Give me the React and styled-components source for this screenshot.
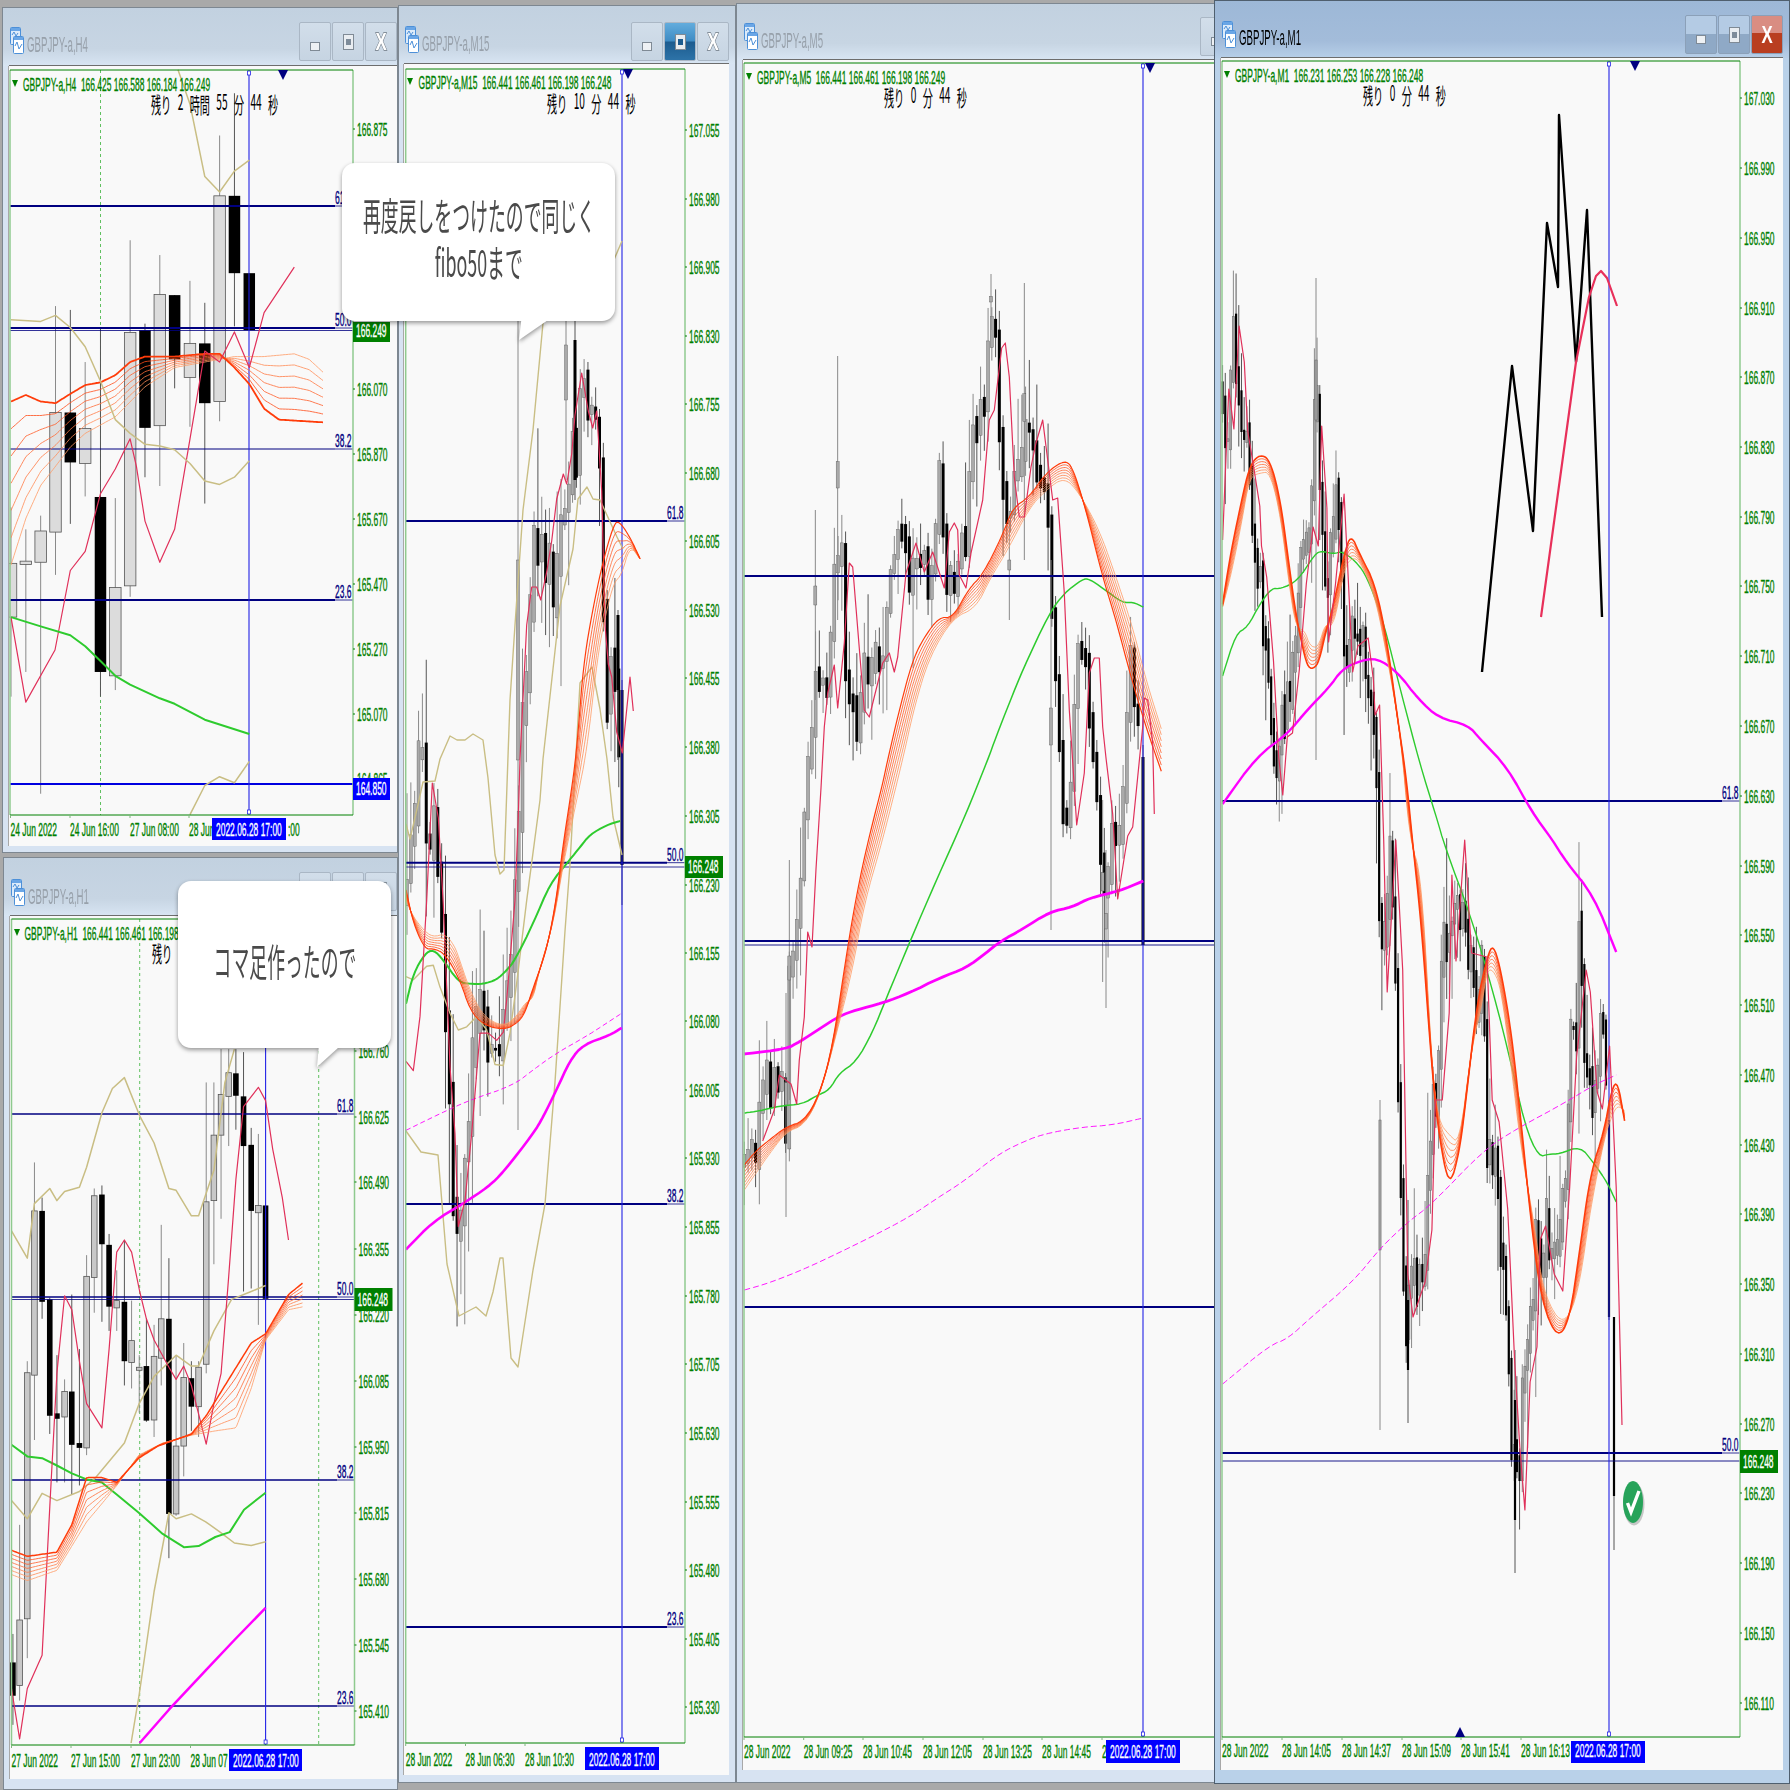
import styled, { createGlobalStyle } from "styled-components";

const GlobalStyle = createGlobalStyle`
  html, body { margin: 0; padding: 0; background: #a9a9a9; }
  #root { width: 1790px; height: 1790px; }
`;

const Stage = styled.div`
  position: relative;
  width: 1790px;
  height: 1790px;
  overflow: hidden;
  background: #a9a9a9;
`;

// desktop windows sit on a free canvas, so they are placed by coordinates
const Window = styled.div`
  position: absolute;
  left: ${(p) => p.$x}px;
  top: ${(p) => p.$y}px;
  width: ${(p) => p.$w}px;
  height: ${(p) => p.$h}px;
  z-index: ${(p) => p.$z};
  box-sizing: border-box;
  display: flex;
  flex-direction: column;
  padding: 0 ${(p) => p.$r}px 0 ${(p) => p.$l}px;
  border: 1px solid ${(p) => (p.$active ? "#4f5f6e" : "#7d8791")};
  background: ${(p) => (p.$active ? "#b9d1e9" : "#d7e3f2")};
`;

const TitleBar = styled.div`
  display: flex;
  align-items: flex-start;
  height: ${(p) => p.$h}px;
  flex-shrink: 0;
  margin: 0 -${(p) => p.$r}px 0 -${(p) => p.$l}px;
  padding: 0 ${(p) => p.$r}px 0 ${(p) => p.$l}px;
  background: ${(p) =>
    p.$active
      ? "linear-gradient(#9db8d7 0%, #a3bcda 70%, #b7cfe8 100%)"
      : "linear-gradient(#c2d1e0 0%, #c7d5e3 70%, #d8e5f3 100%)"};
`;

const IconWrap = styled.svg`
  width: 14px;
  height: 27px;
  margin: ${(p) => p.$top}px 3px 0 1px;
  flex-shrink: 0;
`;

const Title = styled.span`
  display: block;
  margin-top: ${(p) => p.$top}px;
  font-family: "Liberation Sans", Arial, sans-serif;
  font-size: 22px;
  line-height: 22px;
  white-space: nowrap;
  color: ${(p) => (p.$active ? "#000" : "#98a1ab")};
  transform: scaleX(0.44);
  transform-origin: left center;
  width: 0;
`;

const WinButtons = styled.div`
  display: flex;
  gap: 1px;
  margin-left: auto;
  margin-top: ${(p) => p.$top}px;
`;

const WinButton = styled.div`
  box-sizing: border-box;
  width: 32px;
  height: 39px;
  display: flex;
  align-items: center;
  justify-content: center;
  border: 1px solid ${(p) => (p.$active ? "#8ba0b8" : "#aab7c5")};
  border-radius: 2px;
  background: ${(p) =>
    p.$kind === "hot"
      ? "linear-gradient(#62acdd 0%, #3f8cc4 48%, #1d5c8f 52%, #2d73a8 100%)"
      : p.$kind === "close"
      ? "linear-gradient(#d98d82 0 45%, #b93e20 45% 100%)"
      : p.$active
      ? "linear-gradient(#b4cbe4 0 48%, #8fa9c6 48% 100%)"
      : "linear-gradient(#d2deea, #c6d4e2)"};
`;

const MinGlyph = styled.i`
  display: block;
  width: 10px;
  height: 9px;
  margin-top: 9px;
  box-sizing: border-box;
  background: #eef1f4;
  border: 1px solid #7f8a95;
`;

const MaxGlyph = styled.i`
  display: flex;
  align-items: center;
  justify-content: center;
  width: 11px;
  height: 16px;
  box-sizing: border-box;
  background: #e9edf1;
  border: 1px solid #7f8a95;
  &::after {
    content: "";
    width: 5px;
    height: 6px;
    background: ${(p) => (p.$hot ? "#1d5c8f" : "#7e8c9a")};
  }
`;

const CloseGlyph = styled.span`
  font-family: "Liberation Sans", Arial, sans-serif;
  font-weight: 700;
  font-size: 24px;
  line-height: 24px;
  color: #fff;
  transform: scaleX(0.7);
  -webkit-text-stroke: ${(p) => (p.$active ? "0" : "1.4px #6f7984")};
  paint-order: stroke fill;
`;

const ChartBody = styled.div`
  flex: 0 0 auto;
  height: ${(p) => p.$h}px;
  background: #f9f9f9;
  box-shadow: 0 -1px 0 #6d6d6d, -1px 0 0 #a8a8a8;
  overflow: hidden;
`;

const ChartSvg = styled.svg`
  display: block;
`;

const AxisText = styled.text`
  font-family: "Liberation Sans", Arial, sans-serif;
  font-size: ${(p) => p.$size || 18}px;
  fill: ${(p) => p.$color || "#008000"};
  stroke: ${(p) => p.$color || "#008000"};
  stroke-width: 0.35px;
`;

const TimerText = styled.text`
  font-family: "Noto Sans CJK JP", "Liberation Sans", sans-serif;
  font-size: 22px;
  word-spacing: 9px;
  fill: #000;
`;

// callouts lie over the charts
const Bubble = styled.div`
  position: absolute;
  left: ${(p) => p.$x}px;
  top: ${(p) => p.$y}px;
  width: ${(p) => p.$w}px;
  height: ${(p) => p.$h}px;
  z-index: 20;
  box-sizing: border-box;
  display: flex;
  flex-direction: column;
  align-items: center;
  justify-content: center;
  padding-bottom: ${(p) => p.$pb}px;
  background: #fff;
  border-radius: 13px;
  filter: drop-shadow(0 2px 2px rgba(0, 0, 0, 0.4));
  &::after {
    content: "";
    position: absolute;
    left: ${(p) => p.$tail}px;
    top: 100%;
    margin-top: -1px;
    width: ${(p) => p.$tailW}px;
    height: 20px;
    background: #fff;
    clip-path: polygon(0 100%, 8% 0, 100% 0);
  }
`;

const BubbleLine = styled.span`
  font-family: "Noto Sans CJK JP", "Liberation Sans", sans-serif;
  font-size: 38px;
  line-height: 47px;
  color: #4a4a4a;
  white-space: nowrap;
  transform: scaleX(0.47);
  flex-shrink: 0;
`;

// ---- chart helpers

const rng = (seed) => () => {
  seed = (seed + 0x6d2b79f5) | 0;
  let t = Math.imul(seed ^ (seed >>> 15), 1 | seed);
  t = (t + Math.imul(t ^ (t >>> 7), 61 | t)) ^ t;
  return ((t ^ (t >>> 14)) >>> 0) / 4294967296;
};

const interp = (path, x) => {
  if (x <= path[0][0]) return path[0][1];
  for (let i = 1; i < path.length; i++) {
    if (x <= path[i][0]) {
      const [a, b] = path[i - 1];
      const [c, d] = path[i];
      return b + ((d - b) * (x - a)) / (c - a || 1);
    }
  }
  return path[path.length - 1][1];
};

const chaikin = (pts, rounds = 2) => {
  let cur = pts;
  for (let r = 0; r < rounds; r++) {
    const next = [cur[0]];
    for (let i = 0; i < cur.length - 1; i++) {
      const [a, b] = cur[i];
      const [c, d] = cur[i + 1];
      next.push([a * 0.75 + c * 0.25, b * 0.75 + d * 0.25], [a * 0.25 + c * 0.75, b * 0.25 + d * 0.75]);
    }
    next.push(cur[cur.length - 1]);
    cur = next;
  }
  return cur;
};

const genCandles = (path, step, seed, body, wick) => {
  const r = rng(seed);
  const out = [];
  let open = path[0][1];
  for (let x = path[0][0]; x <= path[path.length - 1][0]; x += step) {
    const close = interp(path, x) + (r() - 0.5) * body;
    const extra = r() * body * 0.6;
    const top = Math.min(open, close) - extra * 0.5;
    const bot = Math.max(open, close) + extra * 0.5;
    out.push({ x, hi: top - r() * r() * wick - 4, top, bot, lo: bot + r() * r() * wick + 4, black: close > open });
    open = close;
  }
  return out;
};

const scalePts = (arr, sx, sy, ox, oy) => arr.map(([a, b]) => [ox + a / sx, oy + b / sy]);
const h4 = (arr) => scalePts(arr, 2.09, 1.823, 0, 0);
const h1 = (arr) => scalePts(arr, 2.09, 1.65, 0, 840);
// readings below y 800 on the M15 chart were taken at a slightly different scale
const lower = (y) => (y > 800 ? 800 + (y - 800) * 1.0453 : y);
const m15 = (arr) => arr.map(([a, b]) => [400 + a / 3, lower(b)]);
const m5 = (arr) => arr.map(([a, b]) => [736 + a / 3, b]);
const m1 = (arr) => arr.map(([a, b]) => [1215 + a / 2.904, b]);

const fixedCandles = (rows, conv) =>
  rows.map(([x, hi, top, bot, lo, k]) => {
    const [[cx, yHi], [, yTop], [, yBot], [, yLo]] = conv([[x, hi], [x, top], [x, bot], [x, lo]]);
    return { x: cx, hi: yHi, top: yTop, bot: yBot, lo: yLo, black: k === 1 };
  });

const fanLines = (aIn, bIn, n, opts = {}) => {
  const a = opts.smooth ? chaikin(aIn) : aIn;
  const b = opts.smooth ? chaikin(bIn) : bIn;
  const x0 = Math.max(a[0][0], b[0][0]);
  const x1 = Math.min(a[a.length - 1][0], b[b.length - 1][0]);
  const lines = [];
  for (let i = n; i >= 0; i--) {
    const t = i / n;
    const pts = [];
    for (let x = x0; x <= x1; x += 1.5) pts.push([x, interp(a, x) * (1 - t) + interp(b, x) * t]);
    const g = Math.round(60 + 95 * t);
    const bl = Math.round(10 + 90 * t);
    lines.push({ pts, color: `rgb(255,${g},${bl})`, w: i === 0 ? opts.bold || 1.8 : 0.8 });
  }
  return lines;
};

const pathOf = (pts) => pts.map((p) => `${p[0].toFixed(1)},${p[1].toFixed(1)}`).join(" ");

const RED = "#e0305a";
const KHAKI = "#c9be84";
const GREEN = "#2ecb2e";
const MAG = "#ff00ff";
const NAVY = "#000080";

const Squished = ({ x, y, children, color, size, sx = 0.47 }) => (
  <AxisText $color={color} $size={size} transform={`translate(${x} ${y}) scale(${sx} 1)`}>
    {children}
  </AxisText>
);

const Timer = ({ x, y, text }) => {
  let raised = false;
  const parts = text.split(/(\d+)/).filter(Boolean).map((t, i) => {
    const digit = /\d/.test(t);
    const dy = digit ? -3 : raised ? 3 : 0;
    raised = digit;
    return <tspan key={i} dy={dy}>{t}</tspan>;
  });
  return <TimerText transform={`translate(${x} ${y}) scale(0.46 1)`}>{parts}</TimerText>;
};

const Chart = ({ c }) => {
  const [bx, by, bw, bh] = c.box;
  const [l, t, r, b] = c.frame;
  const half = c.bodyW / 2;
  return (
    <ChartSvg width={bw} height={bh} viewBox={`${bx} ${by} ${bw} ${bh}`}>
      {(c.dashed || []).map((x) => (
        <line key={x} x1={x} x2={x} y1={t} y2={b} stroke="#60c060" strokeWidth="1" strokeDasharray="3 3" />
      ))}
      {c.candles.map((k, i) => (
        <g key={i}>
          <line x1={k.x} x2={k.x} y1={k.hi} y2={k.lo} stroke={k.black ? "#555" : "#8a8a8a"} strokeWidth="1" />
          <rect
            x={k.x - half}
            y={k.top}
            width={c.bodyW}
            height={Math.max(k.bot - k.top, 1.5)}
            fill={k.black ? "#000" : c.bodyFill}
            stroke={k.black ? "none" : "#555"}
            strokeWidth={c.bodyW > 4 ? 0.8 : 0.4}
          />
        </g>
      ))}
      {c.fibs.map((f, i) => (
        <g key={i}>
          <line x1={l} x2={f.label ? f.labelX : r} y1={f.y} y2={f.y} stroke={f.color || NAVY} strokeWidth={f.w || 2} />
          {f.label && <line x1={f.labelX} x2={r} y1={f.y} y2={f.y} stroke={NAVY} strokeWidth="0.8" />}
          {f.label && <Squished x={f.labelX} y={f.y - 2} color={NAVY} size={18}>{f.label}</Squished>}
        </g>
      ))}
      <line x1={c.vline} x2={c.vline} y1={t} y2={b} stroke="#2222e6" strokeWidth="1.1" />
      <rect x={c.vline - 1.5} y={t + 1} width="3" height="4" fill="#fff" stroke="#2222e6" strokeWidth="0.8" />
      <rect x={c.vline - 1.5} y={b - 5} width="3" height="4" fill="#fff" stroke="#2222e6" strokeWidth="0.8" />
      {c.lines.map((ln, i) => (
        <polyline
          key={i}
          points={pathOf(c.smooth && (ln.color === GREEN || ln.color === MAG) ? chaikin(ln.pts) : ln.pts)}
          fill="none"
          stroke={ln.color}
          strokeWidth={ln.w}
          strokeDasharray={ln.dash}
          strokeLinejoin="round"
        />
      ))}
      <line x1={l} x2={l} y1={t} y2={b} stroke="#8fca8f" strokeWidth="1.5" />
      <line x1={r} x2={r} y1={t} y2={b} stroke="#8fca8f" strokeWidth="1.5" />
      <line x1={l} x2={r} y1={t} y2={t} stroke="#008000" strokeWidth="1" />
      <line x1={l} x2={r} y1={b} y2={b} stroke="#008000" strokeWidth="1" />
      <polygon points={`${c.arrow - 5},${t} ${c.arrow + 5},${t} ${c.arrow},${t + 10}`} fill={NAVY} />
      {c.arrowUp && <polygon points={`${c.arrowUp - 5},${b} ${c.arrowUp + 5},${b} ${c.arrowUp},${b - 10}`} fill={NAVY} />}
      <polygon
        points={`${c.head.tri - 3},${c.head.y - 11} ${c.head.tri + 3},${c.head.y - 11} ${c.head.tri},${c.head.y - 4}`}
        fill="#008000"
      />
      <Squished x={c.head.x} y={c.head.y}>{c.head.text}</Squished>
      <Timer x={c.timer.x} y={c.timer.y} text={c.timer.text} />
      {c.prices.map(([txt, y]) => (
        <g key={txt}>
          <line x1={r} x2={r + 2} y1={y} y2={y} stroke="#008000" strokeWidth="1" />
          <Squished x={r + 4} y={y + 7}>{txt}</Squished>
        </g>
      ))}
      {c.priceBoxes.map((pb) => (
        <g key={pb.text}>
          <rect x={r} y={pb.y0} width={pb.w} height={pb.y1 - pb.y0} fill={pb.fill} />
          <Squished x={r + 3} y={pb.y1 - 5} color="#fff">{pb.text}</Squished>
        </g>
      ))}
      {c.dates.map(([txt, x]) => (
        <g key={txt + x}>
          <line x1={x} x2={x} y1={b} y2={b + 3} stroke="#7cb87c" strokeWidth="1" />
          <Squished x={x} y={c.dateY}>{txt}</Squished>
        </g>
      ))}
      <rect x={c.dateBox[0]} y={c.dateBox[2]} width={c.dateBox[1] - c.dateBox[0]} height={c.dateBox[3] - c.dateBox[2]} fill="#0000ff" />
      <Squished x={c.dateBox[0] + 4} y={c.dateY} color="#fff">2022.06.28 17:00</Squished>
      {c.after && <Squished x={c.after[1]} y={c.dateY}>{c.after[0]}</Squished>}
      {c.extra}
    </ChartSvg>
  );
};

// ---- H4

const h4Chart = {
  box: [9, 66, 387, 780],
  frame: [10, 70, 353, 815],
  bodyW: 11.5,
  bodyFill: "#dcdcdc",
  vline: 249,
  dashed: [100.5],
  arrow: 283,
  head: { tri: 15, x: 23, y: 91, text: "GBPJPY-a,H4\u00a0\u00a0166.425 166.588 166.184 166.249" },
  timer: { x: 151, y: 113, text: "残り 2 時間 55 分 44 秒" },
  prices: [["166.875", 129], ["166.070", 389], ["165.870", 454], ["165.670", 519], ["165.470", 584], ["165.270", 649], ["165.070", 714], ["164.865", 779]],
  priceBoxes: [
    { text: "166.249", y0: 322, y1: 342, w: 37, fill: "#008000" },
    { text: "164.850", y0: 778, y1: 800, w: 37, fill: "#0000ff" },
  ],
  fibs: [
    { y: 206, label: "61.8", labelX: 335 },
    { y: 328, label: "50.0", labelX: 335 },
    { y: 330.5, w: 0.8 },
    { y: 449, label: "38.2", labelX: 335, w: 1.2 },
    { y: 600, label: "23.6", labelX: 335 },
    { y: 784, color: "#0000e0" },
  ],
  dates: [["24 Jun 2022", 10.5], ["24 Jun 16:00", 70], ["27 Jun 08:00", 130], ["28 Jun", 189]],
  dateY: 836,
  dateBox: [212, 286, 818, 840],
  after: [":00", 288],
  candles: fixedCandles(
    [
      [23, 925, 1027, 1125, 1270, 0], [54, 965, 1023, 1029, 1225, 0], [85, 940, 968, 1025, 1447, 0], [116, 558, 752, 970, 1048, 0],
      [147, 565, 752, 843, 955, 1], [178, 660, 781, 845, 905, 0], [210, 600, 906, 1225, 1270, 1], [241, 908, 1071, 1232, 1258, 0],
      [272, 438, 606, 1068, 1088, 0], [303, 590, 602, 780, 870, 1], [334, 465, 537, 776, 886, 0], [365, 538, 538, 655, 708, 1],
      [397, 512, 626, 688, 778, 0], [428, 552, 626, 735, 918, 1], [459, 247, 357, 732, 768, 0], [490, 170, 357, 498, 595, 1],
      [521, 498, 498, 602, 602, 1],
    ],
    h4
  ),
  lines: [
    ...fanLines(
      h4([[23, 732], [54, 720], [85, 732], [116, 735], [147, 718], [178, 702], [210, 697], [241, 684], [272, 660], [303, 650], [365, 650], [428, 645], [459, 645], [490, 670], [521, 700], [552, 745], [583, 765], [677, 770]]),
      h4([[23, 1030], [54, 945], [85, 885], [147, 815], [178, 790], [241, 760], [303, 705], [365, 670], [428, 660], [490, 650], [552, 650], [615, 645], [646, 655], [677, 680]]),
      6
    ),
    { color: RED, w: 1.2, pts: h4([[23, 1125], [54, 1280], [115, 1185], [147, 1040], [178, 1005], [210, 900], [241, 855], [272, 800], [285, 850], [303, 950], [334, 1025], [365, 965], [397, 800], [428, 640], [459, 660], [490, 605], [521, 670], [552, 570], [615, 487]]) },
    { color: KHAKI, w: 1.5, pts: h4([[23, 583], [85, 586], [116, 575], [147, 597], [178, 632], [210, 695], [241, 765], [272, 790], [303, 810], [334, 813], [365, 820], [397, 845], [428, 877], [459, 883], [490, 870], [521, 840]]) },
    { color: KHAKI, w: 1.5, pts: h4([[372, 127], [397, 190], [428, 322], [459, 350], [490, 312], [521, 292]]) },
    { color: KHAKI, w: 1.5, pts: h4([[397, 1485], [428, 1432], [459, 1416], [490, 1427], [521, 1388]]) },
    { color: GREEN, w: 2, pts: h4([[23, 1125], [85, 1142], [147, 1158], [178, 1178], [210, 1205], [241, 1232], [272, 1248], [334, 1273], [365, 1283], [428, 1312], [521, 1338]]) },
  ],
};

// ---- H1

const h1Chart = {
  box: [10, 916, 386, 863],
  frame: [11.5, 919, 354.5, 1745],
  bodyW: 5.6,
  bodyFill: "#c8c8c8",
  vline: 265.6,
  dashed: [139.7, 318.7],
  arrow: 283,
  head: { tri: 17, x: 24.5, y: 940, text: "GBPJPY-a,H1\u00a0\u00a0166.441 166.461 166.198" },
  timer: { x: 152, y: 962, text: "残り" },
  prices: [["166.760", 1051], ["166.625", 1117], ["166.490", 1182], ["166.355", 1249], ["166.220", 1315], ["166.085", 1381], ["165.950", 1447], ["165.815", 1513], ["165.680", 1579], ["165.545", 1645], ["165.410", 1711]],
  priceBoxes: [{ text: "166.248", y0: 1288, y1: 1311, w: 38, fill: "#008000" }],
  fibs: [
    { y: 1114, label: "61.8", labelX: 337, w: 1.5 },
    { y: 1297, label: "50.0", labelX: 337, w: 1.6 },
    { y: 1299.5, w: 0.8 },
    { y: 1480, label: "38.2", labelX: 337, w: 1.5 },
    { y: 1706, label: "23.6", labelX: 337, w: 1.5 },
  ],
  dates: [["27 Jun 2022", 11.5], ["27 Jun 15:00", 71], ["27 Jun 23:00", 131], ["28 Jun 07", 190.5]],
  dateY: 1767,
  dateBox: [229, 302, 1749, 1771],
  candles: fixedCandles(
    [
      [27, 1310, 1357, 1412, 1460, 1], [41, 1130, 1287, 1395, 1420, 0], [57, 860, 879, 1285, 1350, 0], [72, 532, 612, 883, 990, 0],
      [88, 590, 612, 762, 790, 1], [104, 755, 758, 950, 980, 1], [119, 850, 946, 955, 1060, 1], [135, 890, 910, 952, 1060, 0],
      [150, 750, 910, 998, 1080, 1], [166, 840, 995, 1003, 1065, 1], [181, 685, 720, 1003, 1015, 0], [197, 575, 587, 722, 780, 0],
      [213, 570, 585, 667, 795, 1], [228, 650, 668, 770, 810, 1], [244, 710, 760, 772, 810, 0], [260, 660, 762, 860, 900, 1],
      [275, 760, 826, 862, 905, 0], [291, 850, 870, 875, 945, 0], [306, 790, 868, 958, 960, 1], [322, 800, 852, 957, 985, 0],
      [337, 635, 790, 855, 900, 0], [353, 690, 790, 1112, 1185, 1], [368, 850, 1000, 1112, 1115, 0], [384, 830, 887, 1000, 1050, 0],
      [400, 860, 888, 935, 975, 1], [415, 860, 870, 935, 985, 0], [431, 400, 597, 865, 880, 0], [447, 400, 487, 595, 700, 0],
      [462, 345, 420, 487, 625, 0], [478, 345, 384, 423, 505, 0], [493, 345, 385, 422, 478, 1], [509, 350, 423, 505, 745, 1],
      [525, 475, 503, 612, 740, 1], [540, 485, 603, 615, 800, 0], [555, 603, 603, 757, 760, 1],
    ],
    h1
  ),
  lines: [
    { color: KHAKI, w: 1.5, pts: h1([[24, 645], [57, 690], [72, 600], [104, 575], [119, 595], [135, 580], [166, 573], [181, 540], [213, 450], [235, 410], [260, 392], [292, 455], [322, 500], [353, 575], [368, 578], [400, 620], [415, 620], [447, 545], [470, 400], [490, 345]]) },
    { color: KHAKI, w: 1.5, pts: h1([[24, 1090], [57, 1120], [88, 1078], [119, 1090], [166, 1075], [200, 1052], [260, 995], [291, 930], [322, 885], [368, 850], [400, 868], [415, 868], [447, 810], [484, 758], [525, 745], [555, 735]]) },
    { color: KHAKI, w: 1.5, pts: h1([[274, 1490], [291, 1410], [322, 1240], [353, 1110], [368, 1120], [400, 1112], [430, 1125], [460, 1142], [490, 1160], [525, 1164], [555, 1158]]) },
    { color: GREEN, w: 2, pts: h1([[24, 998], [57, 1017], [88, 1020], [119, 1032], [150, 1045], [181, 1055], [213, 1060], [244, 1080], [290, 1110], [340, 1145], [385, 1167], [415, 1165], [450, 1150], [480, 1142], [510, 1105], [555, 1077]]) },
    { color: MAG, w: 2.5, pts: h1([[292, 1490], [353, 1435], [430, 1370], [490, 1320], [555, 1267]]) },
    { color: RED, w: 1.2, pts: h1([[24, 1400], [41, 1483], [57, 1400], [88, 1345], [104, 1100], [119, 880], [135, 752], [150, 775], [166, 860], [181, 930], [213, 970], [228, 840], [244, 680], [260, 660], [275, 680], [292, 745], [306, 790], [322, 825], [353, 870], [368, 890], [384, 868], [400, 900], [431, 997], [447, 930], [462, 880], [478, 720], [493, 560], [509, 440], [540, 408], [555, 430], [570, 510], [590, 590], [603, 660]]) },
    ...fanLines(
      h1([[24, 1172], [57, 1182], [119, 1175], [150, 1130], [181, 1052], [213, 1052], [244, 1060], [290, 1020], [330, 1000], [400, 980], [431, 950], [478, 890], [525, 830], [555, 815], [603, 750], [634, 730]]),
      h1([[24, 1212], [57, 1222], [119, 1205], [150, 1165], [181, 1125], [213, 1095], [244, 1065], [290, 1015], [340, 995], [400, 982], [450, 975], [493, 970], [525, 905], [555, 825], [603, 775], [634, 770]]),
      6,
      { bold: 1.5 }
    ),
  ],
};

// ---- M15

const m15Path = [
  [407, 900], [412, 820], [421, 745], [426, 830], [433, 832], [440, 864], [443, 934], [450, 1119], [455, 1214], [462, 1199], [465, 1151], [472, 1055], [480, 1007], [485, 1004], [492, 1055], [500, 1055], [503, 998], [507, 975],
  [513, 928], [518, 832], [522, 721], [530, 606], [535, 510], [540, 549], [548, 568], [555, 587], [559, 510], [565, 491], [571, 453], [575, 472], [582, 376], [585, 357], [589, 407], [593, 396], [597, 407], [602, 491], [604, 664], [607, 702], [612, 625], [615, 664], [618, 759], [620, 700],
].map(([x, y]) => [x, lower(y)]);

const m15Chart = {
  box: [404, 64, 324, 1711],
  frame: [405.7, 69, 685, 1743],
  smooth: true,
  bodyW: 3,
  bodyFill: "#aaaaaa",
  vline: 622,
  arrow: 628,
  head: { tri: 410, x: 418.6, y: 89, text: "GBPJPY-a,M15\u00a0\u00a0166.441 166.461 166.198 166.248" },
  timer: { x: 547, y: 112, text: "残り 10 分 44 秒" },
  prices: [["167.055", 130], ["166.980", 199], ["166.905", 267], ["166.830", 336], ["166.755", 404], ["166.680", 473], ["166.605", 541], ["166.530", 610], ["166.455", 678], ["166.380", 747], ["166.305", 816], ["166.230", 885], ["166.155", 953], ["166.080", 1021], ["166.005", 1090], ["165.930", 1158], ["165.855", 1227], ["165.780", 1296], ["165.705", 1364], ["165.630", 1433], ["165.555", 1502], ["165.480", 1570], ["165.405", 1639], ["165.330", 1707]],
  priceBoxes: [{ text: "166.248", y0: 856, y1: 878, w: 38, fill: "#008000" }],
  fibs: [
    { y: 521, label: "61.8", labelX: 667 },
    { y: 862.7, label: "50.0", labelX: 667 },
    { y: 867, w: 0.8 },
    { y: 1204, label: "38.2", labelX: 667 },
    { y: 1627, label: "23.6", labelX: 667 },
  ],
  dates: [["28 Jun 2022", 405.7], ["28 Jun 06:30", 465.5], ["28 Jun 10:30", 525]],
  dateY: 1766,
  dateBox: [585, 659, 1747, 1770],
  candles: [
    ...genCandles(m15Path, 3.85, 7, 50, 120),
    { x: 518, hi: 320, top: 560, bot: 760, lo: 1130, black: false },
    { x: 566, hi: 320, top: 345, bot: 400, lo: 480, black: false },
    { x: 575, hi: 320, top: 340, bot: 480, lo: 500, black: true },
    { x: 618, hi: 610, top: 615, bot: 690, lo: 760, black: true },
    { x: 622, hi: 680, top: 690, bot: 865, lo: 905, black: true },
  ],
  lines: [
    { color: KHAKI, w: 1.4, pts: m15([[18, 969], [40, 972], [80, 959], [100, 958], [120, 979], [150, 1004], [175, 1020], [200, 1017], [230, 1007], [260, 1020], [285, 1053], [310, 1054], [330, 1023], [350, 975], [380, 896]]).concat([[540, 800], [543, 759], [560, 606], [573, 549], [578, 499], [587, 487], [593, 499], [600, 500], [617, 537], [623, 549]]) },
    { color: KHAKI, w: 1.4, pts: [[406, 824], [410, 839], [417, 809], [423, 782], [435, 781], [440, 759], [450, 736], [457, 740], [465, 740], [473, 734], [483, 740], [488, 778], [495, 855], [500, 874], [504, 870], [510, 700], [515, 625], [523, 510], [533, 430], [543, 323], [555, 200]] },
    { color: KHAKI, w: 1.4, pts: [[406, 1131], [421, 1152], [438, 1155], [447, 1264], [459, 1316], [476, 1307], [486, 1316], [493, 1292], [500, 1258], [503, 1258], [511, 1358], [518, 1367], [533, 1270], [545, 1204], [555, 1082], [565, 931], [570, 864], [580, 683], [592, 667], [600, 709], [607, 759], [613, 817], [622, 855]] },
    { color: KHAKI, w: 1.4, pts: [[613, 262], [622, 241]] },
    { color: GREEN, w: 2, pts: m15([[18, 995], [40, 966], [75, 947], [100, 943], [130, 953], [175, 974], [210, 976], [250, 976], [290, 972], [320, 963], [345, 953], [400, 918], [450, 880], [510, 857], [540, 845], [570, 833], [620, 824], [660, 820]]) },
    { color: MAG, w: 2.6, pts: m15([[18, 1230], [100, 1203], [190, 1186], [265, 1170], [310, 1156], [400, 1119], [430, 1103], [470, 1077], [510, 1049], [550, 1034], [630, 1025], [665, 1018]]) },
    { color: MAG, w: 0.9, dash: "5 3", pts: m15([[18, 1116], [120, 1100], [210, 1087], [340, 1073], [400, 1058], [470, 1042], [560, 1026], [665, 1004]]) },
    { color: RED, w: 1.2, pts: m15([[18, 1050], [40, 1059], [60, 1007], [80, 896], [97, 783], [115, 817], [130, 900], [150, 1055], [165, 1119], [175, 1208], [195, 1183], [215, 1119], [240, 1023], [265, 1023], [290, 1030], [310, 1022], [320, 991], [345, 896], [355, 816], [360, 759], [380, 625], [395, 587], [410, 587], [422, 600], [440, 572], [455, 541], [470, 499], [490, 474], [500, 484], [515, 454], [525, 415], [545, 373], [565, 411], [578, 428], [590, 411], [605, 491], [615, 625], [625, 664], [635, 677], [650, 732], [667, 753], [690, 677], [700, 711]]) },
    ...fanLines(
      m15([[18, 886], [40, 918], [75, 943], [100, 942], [135, 947], [180, 972], [210, 1001], [250, 1015], [310, 1020], [350, 1014], [375, 1004], [400, 979], [430, 953], [450, 928], [470, 892], [490, 841], [510, 800], [530, 752], [550, 664], [580, 606], [610, 560], [640, 526], [655, 520], [690, 537], [722, 560]]),
      m15([[18, 896], [40, 912], [75, 926], [100, 931], [135, 928], [165, 940], [185, 959], [210, 982], [250, 1007], [310, 1017], [350, 1007], [375, 994], [400, 990], [415, 966], [460, 918], [490, 861], [530, 800], [560, 752], [590, 664], [610, 625], [640, 583], [665, 575], [690, 545], [722, 560]]),
      6,
      { smooth: true, bold: 1.2 }
    ),
  ],
};

// ---- M5

const m5Path = m5([
  [25, 1162], [40, 1132], [60, 1151], [90, 1073], [115, 1091], [135, 1066], [150, 1128], [160, 962], [170, 943], [185, 943], [205, 814], [215, 758], [225, 743], [240, 660], [260, 693], [270, 687], [285, 627], [295, 553], [318, 570], [328, 660], [350, 710], [362, 727], [385, 660], [395, 687], [418, 643], [430, 670], [440, 673], [460, 577], [475, 560], [495, 537], [510, 527], [520, 577], [545, 550], [560, 560], [575, 593], [590, 577], [610, 467], [620, 510], [630, 580], [650, 590], [665, 580], [675, 527], [690, 533], [705, 460], [720, 420], [745, 410], [755, 343], [765, 300], [775, 327], [790, 427], [810, 517], [830, 503], [845, 467], [865, 437], [875, 427], [887, 410], [898, 467], [910, 493], [920, 487], [935, 510], [945, 593], [955, 653], [965, 727], [975, 807], [990, 832], [1000, 795], [1030, 627], [1045, 660], [1055, 693], [1065, 727], [1080, 770], [1090, 821], [1100, 895], [1110, 914], [1120, 869], [1135, 832], [1155, 821], [1165, 777], [1180, 660], [1190, 677], [1200, 727], [1212, 745],
]);

const m5Spikes = m5([[150, 993, 1217], [305, 356, 620], [238, 510, 700], [765, 274, 330], [865, 283, 560], [820, 520, 620], [1100, 800, 982], [1110, 850, 1008], [945, 560, 930], [160, 860, 1100]]);

const m5Chart = {
  box: [743, 60, 555, 1710],
  frame: [744, 63, 1310, 1737],
  smooth: true,
  bodyW: 3,
  bodyFill: "#aaaaaa",
  vline: 1143,
  arrow: 1150,
  head: { tri: 749, x: 757, y: 84, text: "GBPJPY-a,M5\u00a0\u00a0166.441 166.461 166.198 166.249" },
  timer: { x: 884, y: 106, text: "残り 0 分 44 秒" },
  prices: [],
  priceBoxes: [],
  fibs: [{ y: 576 }, { y: 941 }, { y: 945, w: 0.9 }, { y: 1307 }],
  dates: [["28 Jun 2022", 744], ["28 Jun 09:25", 803.7], ["28 Jun 10:45", 863], ["28 Jun 12:05", 923], ["28 Jun 13:25", 983], ["28 Jun 14:45", 1042], ["2", 1102]],
  dateY: 1758,
  dateBox: [1106, 1180, 1740, 1763],
  candles: [
    ...genCandles(m5Path, 3.75, 21, 38, 80),
    ...[[150, 993, 1217], [305, 356, 620], [238, 510, 700], [765, 274, 330], [865, 283, 560], [820, 520, 620], [1100, 800, 982], [1110, 850, 1008], [945, 560, 930], [160, 860, 1100]].map(([zx, hi, lo]) => ({
      x: 736 + zx / 3,
      hi,
      lo,
      top: hi + (lo - hi) * 0.4,
      bot: hi + (lo - hi) * 0.5,
      black: false,
    })),
    { x: 1143, hi: 745, top: 757, bot: 945, lo: 945, black: true },
  ],
  lines: [
    { color: GREEN, w: 1.5, pts: m5([[25, 1113], [70, 1111], [130, 1106], [200, 1104], [240, 1096], [280, 1090], [310, 1073], [360, 1062], [410, 1032], [450, 999], [520, 943], [600, 881], [690, 814], [755, 760], [780, 737], [820, 703], [860, 670], [940, 613], [985, 593], [1040, 579], [1060, 579], [1100, 588], [1160, 603], [1190, 602], [1222, 607]]) },
    { color: MAG, w: 2.8, pts: m5([[25, 1054], [150, 1049], [190, 1042], [250, 1029], [310, 1016], [360, 1010], [440, 1003], [520, 993], [610, 978], [690, 968], [750, 953], [790, 942], [860, 929], [940, 912], [1010, 907], [1060, 898], [1150, 891], [1222, 881]]) },
    { color: MAG, w: 0.9, dash: "6 3", pts: m5([[25, 1290], [100, 1283], [220, 1267], [400, 1238], [520, 1217], [600, 1199], [680, 1182], [780, 1156], [840, 1145], [920, 1134], [1040, 1127], [1130, 1125], [1222, 1118]]) },
    ...fanLines(
      m5([[25, 1165], [60, 1151], [100, 1140], [150, 1127], [205, 1121], [250, 1095], [290, 1047], [340, 936], [370, 881], [400, 836], [440, 784], [455, 760], [490, 710], [530, 660], [565, 637], [610, 617], [650, 618], [700, 588], [740, 575], [800, 535], [830, 508], [880, 497], [930, 473], [985, 460], [1010, 467], [1050, 510], [1100, 577], [1140, 620], [1185, 677], [1230, 727], [1280, 775]]),
      m5([[25, 1190], [60, 1173], [100, 1154], [150, 1132], [205, 1125], [250, 1097], [300, 1036], [350, 969], [385, 903], [440, 840], [500, 760], [535, 707], [580, 657], [650, 618], [720, 608], [765, 577], [815, 550], [880, 508], [930, 490], [985, 477], [1030, 493], [1090, 530], [1140, 577], [1190, 627], [1230, 680], [1280, 733]]),
      7,
      { smooth: true, bold: 1.2 }
    ),
    { color: RED, w: 1.2, pts: m5([[80, 1141], [115, 1110], [130, 1075], [165, 1084], [182, 1104], [190, 1060], [205, 1017], [215, 932], [228, 947], [240, 869], [255, 788], [265, 727], [275, 693], [295, 665], [305, 708], [325, 643], [340, 563], [350, 567], [385, 710], [400, 717], [440, 663], [460, 653], [475, 672], [485, 657], [510, 573], [540, 543], [565, 572], [590, 552], [625, 588], [640, 532], [655, 523], [665, 530], [670, 575], [690, 588], [705, 553], [740, 500], [760, 420], [775, 410], [797, 348], [808, 343], [820, 377], [835, 477], [850, 517], [865, 517], [885, 467], [900, 443], [920, 420], [935, 460], [950, 500], [965, 498], [985, 593], [1000, 710], [1010, 762], [1022, 825], [1045, 773], [1060, 673], [1075, 658], [1090, 658], [1100, 727], [1110, 758], [1130, 814], [1145, 899], [1175, 836], [1190, 827], [1205, 777], [1220, 727], [1225, 698], [1235, 700], [1250, 743], [1255, 814]]) },
  ],
};

// ---- M1

const m1Path = m1([
  [22, 393], [30, 431], [40, 431], [50, 317], [60, 355], [70, 412], [95, 450], [105, 508], [125, 558], [140, 623], [160, 692], [175, 776], [190, 737], [205, 718], [225, 680], [240, 604], [260, 538], [275, 546], [285, 450], [295, 401], [310, 538], [325, 604], [340, 527], [350, 489], [365, 527], [380, 680], [395, 623], [410, 642], [430, 642], [445, 699], [460, 718], [470, 814], [480, 970], [490, 927], [510, 862], [525, 970], [540, 1209], [555, 1317], [575, 1274], [590, 1291], [610, 1252], [625, 1144], [630, 1078], [645, 1100], [660, 927], [680, 927], [690, 918], [720, 927], [740, 961], [760, 1022], [780, 961], [790, 1144], [820, 1187], [840, 1295], [855, 1404], [875, 1490], [885, 1456], [900, 1360], [915, 1334], [930, 1252], [945, 1274], [965, 1230], [985, 1252], [1000, 1230], [1020, 1187], [1035, 1035], [1050, 1048], [1060, 905], [1075, 1100], [1090, 1078], [1105, 1100], [1125, 1026], [1140, 1118],
]);

const CheckBadge = () => (
  <g>
    <ellipse cx="1634" cy="1504" rx="10.5" ry="21.5" fill="#000" opacity="0.2" />
    <ellipse cx="1633" cy="1502" rx="10" ry="21" fill="#27a35a" />
    <polyline points="1627.5,1503 1631,1512 1639,1491" fill="none" stroke="#fff" strokeWidth="3.4" />
  </g>
);

const m1Chart = {
  box: [1221, 58, 562, 1712],
  frame: [1222, 61, 1740, 1737],
  smooth: true,
  bodyW: 2.2,
  bodyFill: "#a0a0a0",
  vline: 1609,
  arrow: 1635,
  arrowUp: 1460,
  head: { tri: 1227, x: 1235, y: 82, text: "GBPJPY-a,M1\u00a0\u00a0166.231 166.253 166.228 166.248" },
  timer: { x: 1363, y: 104, text: "残り 0 分 44 秒" },
  prices: [["167.030", 98], ["166.990", 168], ["166.950", 238], ["166.910", 308], ["166.870", 377], ["166.830", 447], ["166.790", 517], ["166.750", 586], ["166.710", 656], ["166.670", 726], ["166.630", 796], ["166.590", 866], ["166.550", 935], ["166.510", 1005], ["166.470", 1075], ["166.430", 1145], ["166.390", 1214], ["166.350", 1284], ["166.310", 1354], ["166.270", 1424], ["166.230", 1493], ["166.190", 1563], ["166.150", 1633], ["166.110", 1703]],
  priceBoxes: [{ text: "166.248", y0: 1450, y1: 1473, w: 38, fill: "#008000" }],
  fibs: [
    { y: 801, label: "61.8", labelX: 1722 },
    { y: 1453, label: "50.0", labelX: 1722 },
    { y: 1461, w: 0.9 },
  ],
  dates: [["28 Jun 2022", 1222], ["28 Jun 14:05", 1282], ["28 Jun 14:37", 1342], ["28 Jun 15:09", 1402], ["28 Jun 15:41", 1461], ["28 Jun 16:13", 1521]],
  dateY: 1757,
  dateBox: [1571, 1645, 1741, 1763],
  candles: [
    ...genCandles(m1Path, 2.7, 5, 50, 90),
    { x: 1316, hi: 278, top: 360, bot: 420, lo: 760, black: false },
    { x: 1380, hi: 1100, top: 1120, bot: 1250, lo: 1430, black: false },
    { x: 1408, hi: 1200, top: 1300, bot: 1370, lo: 1423, black: true },
    { x: 1515, hi: 1350, top: 1400, bot: 1520, lo: 1573, black: true },
    { x: 1609, hi: 1100, top: 1120, bot: 1317, lo: 1320, black: true },
    { x: 1614, hi: 1317, top: 1317, bot: 1496, lo: 1550, black: true },
  ],
  lines: [
    { color: GREEN, w: 1.4, pts: m1([[22, 676], [60, 634], [95, 627], [130, 604], [165, 588], [190, 589], [240, 581], [290, 554], [310, 551], [345, 554], [370, 551], [420, 565], [450, 584], [490, 623], [540, 692], [595, 764], [640, 814], [670, 849], [740, 914], [790, 970], [850, 1048], [900, 1126], [940, 1157], [970, 1154], [1000, 1154], [1060, 1146], [1100, 1163], [1140, 1183], [1165, 1202]]) },
    { color: MAG, w: 2.4, pts: m1([[22, 804], [120, 757], [210, 734], [270, 709], [330, 688], [370, 669], [420, 661], [470, 658], [530, 672], [590, 699], [650, 718], [735, 725], [770, 739], [850, 768], [920, 812], [980, 840], [1020, 862], [1100, 896], [1165, 952]]) },
    { color: MAG, w: 0.9, dash: "6 3", pts: m1([[22, 1384], [160, 1345], [210, 1339], [280, 1317], [400, 1282], [480, 1248], [560, 1222], [630, 1204], [780, 1150], [880, 1128], [1020, 1102], [1100, 1085], [1165, 1075]]) },
    ...fanLines(
      m1([[22, 604], [45, 554], [75, 504], [100, 466], [130, 454], [160, 460], [190, 500], [215, 565], [235, 615], [260, 657], [275, 670], [300, 665], [320, 634], [345, 604], [375, 554], [395, 534], [420, 554], [465, 584], [500, 642], [530, 718], [555, 776], [573, 840], [600, 927], [630, 1070], [650, 1135], [680, 1189], [710, 1152], [730, 1096], [760, 1005], [790, 957], [808, 944], [830, 970], [860, 1031], [885, 1109], [920, 1230], [950, 1304], [995, 1339], [1030, 1319], [1060, 1248], [1090, 1174], [1130, 1131], [1150, 1092], [1168, 1079], [1190, 1122]]),
      m1([[22, 607], [45, 577], [75, 527], [100, 477], [130, 473], [160, 472], [190, 515], [215, 584], [235, 628], [260, 630], [275, 646], [300, 648], [320, 623], [345, 627], [375, 569], [395, 558], [420, 560], [465, 596], [500, 657], [540, 737], [565, 840], [600, 875], [630, 1070], [650, 1122], [680, 1135], [710, 1144], [745, 1048], [775, 1005], [790, 970], [808, 970], [830, 987], [860, 1066], [890, 1152], [930, 1230], [950, 1287], [995, 1321], [1030, 1317], [1060, 1282], [1090, 1209], [1130, 1139], [1150, 1118], [1168, 1105], [1190, 1111]]),
      6,
      { smooth: true, bold: 1.6 }
    ),
    { color: RED, w: 1.2, pts: m1([[22, 540], [40, 389], [55, 429], [70, 326], [85, 362], [95, 431], [110, 462], [130, 506], [135, 546], [150, 577], [170, 661], [185, 757], [197, 795], [210, 737], [225, 733], [245, 669], [265, 584], [285, 527], [300, 546], [310, 426], [325, 508], [330, 642], [350, 584], [375, 494], [385, 565], [400, 672], [415, 646], [445, 638], [460, 680], [465, 715], [478, 705], [490, 840], [500, 992], [525, 840], [545, 970], [560, 1274], [575, 1317], [610, 1282], [630, 1230], [640, 1100], [660, 1100], [680, 1013], [688, 875], [700, 961], [725, 840], [745, 953], [790, 957], [805, 1100], [825, 1122], [850, 1209], [870, 1360], [885, 1447], [900, 1510], [915, 1382], [935, 1347], [945, 1239], [960, 1226], [985, 1274], [1010, 1291], [1030, 1187], [1050, 1057], [1078, 970], [1090, 992], [1110, 1092], [1125, 1109], [1146, 1046], [1165, 1187], [1182, 1425]]) },
    { color: "#000", w: 2.4, pts: [[1482, 672], [1512, 366], [1533, 531], [1547, 223], [1558, 287], [1559, 115], [1576, 362], [1587, 210], [1602, 617]] },
    { color: "#e8305a", w: 2.2, pts: [[1541, 617], [1576, 362], [1589, 297], [1596, 276], [1601, 271], [1607, 278], [1617, 306]] },
  ],
  extra: <CheckBadge />,
};

const WinIcon = ({ top }) => (
  <IconWrap $top={top} viewBox="0 0 14 27" preserveAspectRatio="none">
    <rect x="0.5" y="0.5" width="10" height="17" rx="1" fill="#dcebfa" stroke="#4d90d8" />
    <rect x="1" y="1" width="9" height="3" fill="#6aa6e6" />
    <rect x="3.5" y="9.5" width="10" height="17" rx="1" fill="#fff" stroke="#4d90d8" />
    <rect x="4" y="10" width="9" height="3" fill="#6aa6e6" />
    <polyline points="2,8 4,5 6,9 8,6" fill="none" stroke="#4d90d8" strokeWidth="1" />
    <polyline points="5,19 7,15 9,22 12,17" fill="none" stroke="#4d90d8" strokeWidth="1" />
  </IconWrap>
);

const ChartWindow = ({ win, chart, hot }) => {
  const { x, y, w, h, z, titleH, l, r, active, name, iconTop, textTop, btnTop } = win;
  return (
    <Window $x={x} $y={y} $w={w} $h={h} $z={z} $l={l} $r={r} $active={active}>
      <TitleBar $h={titleH} $l={l} $r={r} $active={active}>
        <WinIcon top={iconTop} />
        <Title $top={textTop} $active={active}>{name}</Title>
        <WinButtons $top={btnTop}>
          <WinButton $active={active}><MinGlyph /></WinButton>
          <WinButton $active={active} $kind={hot ? "hot" : undefined}><MaxGlyph $hot={hot} /></WinButton>
          <WinButton $active={active} $kind={active ? "close" : undefined}><CloseGlyph $active={active}>X</CloseGlyph></WinButton>
        </WinButtons>
      </TitleBar>
      <ChartBody $h={chart.box[3]}>
        <Chart c={chart} />
      </ChartBody>
    </Window>
  );
};

export default function App() {
  return (
    <Stage>
      <GlobalStyle />
      <ChartWindow
        chart={h4Chart}
        win={{ x: 2, y: 7, w: 396, h: 846, z: 1, titleH: 58, l: 6, r: 0, name: "GBPJPY-a,H4", iconTop: 19, textTop: 26, btnTop: 14 }}
      />
      <ChartWindow
        chart={h1Chart}
        win={{ x: 3, y: 857, w: 395, h: 933, z: 2, titleH: 58, l: 6, r: 0, name: "GBPJPY-a,H1", iconTop: 21, textTop: 28, btnTop: 14 }}
      />
      <ChartWindow
        hot
        chart={m15Chart}
        win={{ x: 398, y: 5, w: 338, h: 1778, z: 3, titleH: 58, l: 5, r: 6, name: "GBPJPY-a,M15", iconTop: 20, textTop: 27, btnTop: 16 }}
      />
      <ChartWindow
        chart={m5Chart}
        win={{ x: 736, y: 3, w: 564, h: 1780, z: 4, titleH: 56, l: 6, r: 1, name: "GBPJPY-a,M5", iconTop: 19, textTop: 26, btnTop: 13 }}
      />
      <ChartWindow
        chart={m1Chart}
        win={{ x: 1214, y: 0, w: 576, h: 1784, z: 5, titleH: 57, l: 6, r: 6, active: true, name: "GBPJPY-a,M1", iconTop: 20, textTop: 26, btnTop: 14 }}
      />
      <Bubble $x={342} $y={163} $w={273} $h={158} $pb={10} $tail={177} $tailW={29}>
        <BubbleLine>再度戻しをつけたので同じく</BubbleLine>
        <BubbleLine>fibo50まで</BubbleLine>
      </Bubble>
      <Bubble $x={178} $y={881} $w={213} $h={167} $pb={10} $tail={139} $tailW={22}>
        <BubbleLine>コマ足作ったので</BubbleLine>
      </Bubble>
    </Stage>
  );
}
